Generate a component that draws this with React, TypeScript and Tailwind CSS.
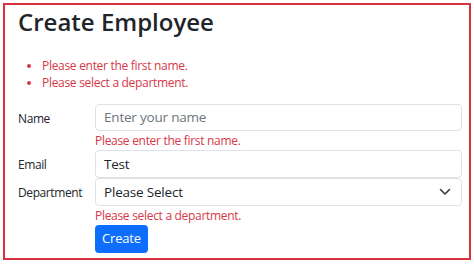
import React from "react";

const font = { fontFamily: '"Open Sans", "Noto Sans", sans-serif' };

export default function App() {
  return (
    <div className="w-[474px] h-[264px] bg-white pl-[3px] pt-[3px]" style={font}>
      <div className="w-[468px] h-[257px] border-2 border-[#d6323f] pl-[13px] flex flex-col text-[#212529]">
        <h1 className="mt-[2px] h-[30px] leading-[30px] text-[24px] font-semibold tracking-[0px]">Create Employee</h1>
        <ul className="mt-[20px] list-disc pl-[24px] text-[12px] leading-[17px] text-[#d63747] tracking-[-0.3px]">
          <li>Please enter the first name.</li>
          <li>Please select a department.</li>
        </ul>
        <div className="mt-[13px] grid grid-cols-[77px_367px] text-[12px] tracking-[-0.4px]">
          <div className="h-[27px] flex items-center pt-[2px]">Name</div>
          <div>
            <div className="h-[27px] border border-[#dee2e6] rounded-[4px] flex items-center pl-[8px] text-[13.5px] tracking-[-0.2px] text-[#6c757d]">Enter your name</div>
            <div className="h-[19px] leading-[19px] text-[12px] text-[#d63747] tracking-[-0.3px]">Please enter the first name.</div>
          </div>
          <div className="h-[28px] flex items-center pt-[2px]">Email</div>
          <div className="h-[28px] border border-[#dee2e6] rounded-[4px] flex items-center pl-[8px] text-[13.5px] tracking-[-0.2px]">Test</div>
          <div className="h-[28px] flex items-center pt-[2px]">Department</div>
          <div>
            <div className="h-[28px] border border-[#dee2e6] rounded-[4px] flex items-center justify-between pl-[8px] pr-[10px] text-[13.5px] tracking-[-0.2px]">
              <span>Please Select</span>
              <svg width="12" height="8" viewBox="0 0 12 8" fill="none">
                <path d="M1.5 1.5 6 6l4.5-4.5" stroke="#343a40" strokeWidth="1.6" strokeLinecap="round" strokeLinejoin="round" />
              </svg>
            </div>
            <div className="h-[19px] leading-[19px] text-[12px] text-[#d63747] tracking-[-0.3px]">Please select a department.</div>
            <button className="w-[53px] h-[28px] bg-[#0d6efd] text-white rounded-[4px] text-[13px] tracking-[-0.2px]">Create</button>
          </div>
        </div>
      </div>
    </div>
  );
}
